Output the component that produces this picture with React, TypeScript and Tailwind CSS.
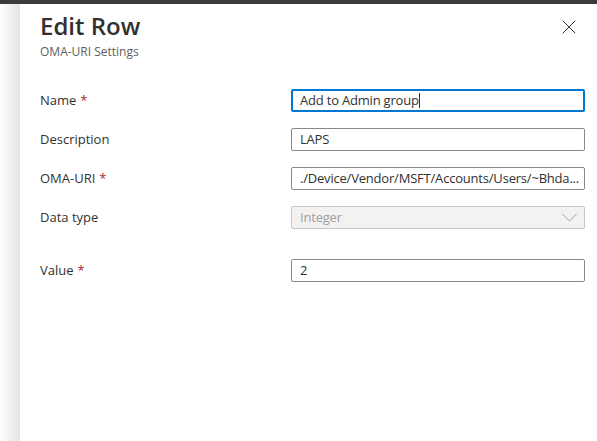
import { X } from 'lucide-react';

interface Field {
  label: string;
  value: string;
  required?: boolean;
  focused?: boolean;
  disabled?: boolean;
  select?: boolean;
  spaced?: boolean;
}

const fields: Field[] = [
  { label: 'Name', value: 'Add to Admin group', required: true, focused: true },
  { label: 'Description', value: 'LAPS' },
  { label: 'OMA-URI', value: './Device/Vendor/MSFT/Accounts/Users/~Bhda...', required: true },
  { label: 'Data type', value: 'Integer', disabled: true, select: true },
  { label: 'Value', value: '2', required: true, spaced: true },
];

function FieldInput({ field }: { field: Field }) {
  if (field.select) {
    return (
      <div className="h-[23px] border border-[#c8c6c4] bg-[#f3f2f1] rounded-[2px] flex items-center justify-between pl-[8px] pr-[7px] text-[#a19f9d] tracking-[-0.2px]">
        <span>{field.value}</span>
        <svg width="15" height="9" viewBox="0 0 15 9" fill="none" stroke="#a19f9d" strokeWidth="1">
          <polyline points="0.5,1 7.5,8 14.5,1" />
        </svg>
      </div>
    );
  }
  return (
    <div
      className={`h-[23px] rounded-[2px] flex items-center text-[#323130] overflow-hidden whitespace-nowrap tracking-[-0.2px] ${
        field.focused ? 'border-2 border-[#0078d4] pl-[7px]' : 'border border-[#8a8886] pl-[8px]'
      }`}
    >
      <span>{field.value}</span>
      {field.focused && <span className="w-px h-[15px] bg-[#323130]" />}
    </div>
  );
}

export default function App() {
  return (
    <div
      className="w-[597px] h-[441px] flex flex-col bg-white overflow-hidden"
      style={{ fontFamily: '"Open Sans", "Noto Sans", sans-serif' }}
    >
      <div className="h-[4px] bg-[#3b3b3b]" />
      <div className="flex flex-1">
        <div className="w-[20px] bg-gradient-to-r from-white to-[#e4e4e4]" />
        <div className="flex-1 bg-white pl-[20px] pr-[12px]">
          <div className="flex justify-between items-start pt-[6px]">
            <div>
              <h1 className="text-[24px] leading-[32px] font-semibold text-[#323130]">Edit Row</h1>
              <p className="text-[12px] leading-[16px] text-[#605e5c] mt-[2px]">OMA-URI Settings</p>
            </div>
            <button className="mt-[5px] mr-[4px] text-[#323130]">
              <X size={24} strokeWidth={1} />
            </button>
          </div>

          <div className="mt-[29px] flex flex-col gap-[16px] text-[13px]">
            {fields.map((f) => (
              <div key={f.label} className={`grid grid-cols-[251px_1fr] items-center ${f.spaced ? 'mt-[14px]' : ''}`}>
                <label className="text-[#323130]">
                  {f.label}
                  {f.required && <span className="text-[#a4262c] ml-[4px]">*</span>}
                </label>
                <FieldInput field={f} />
              </div>
            ))}
          </div>
        </div>
      </div>
    </div>
  );
}
